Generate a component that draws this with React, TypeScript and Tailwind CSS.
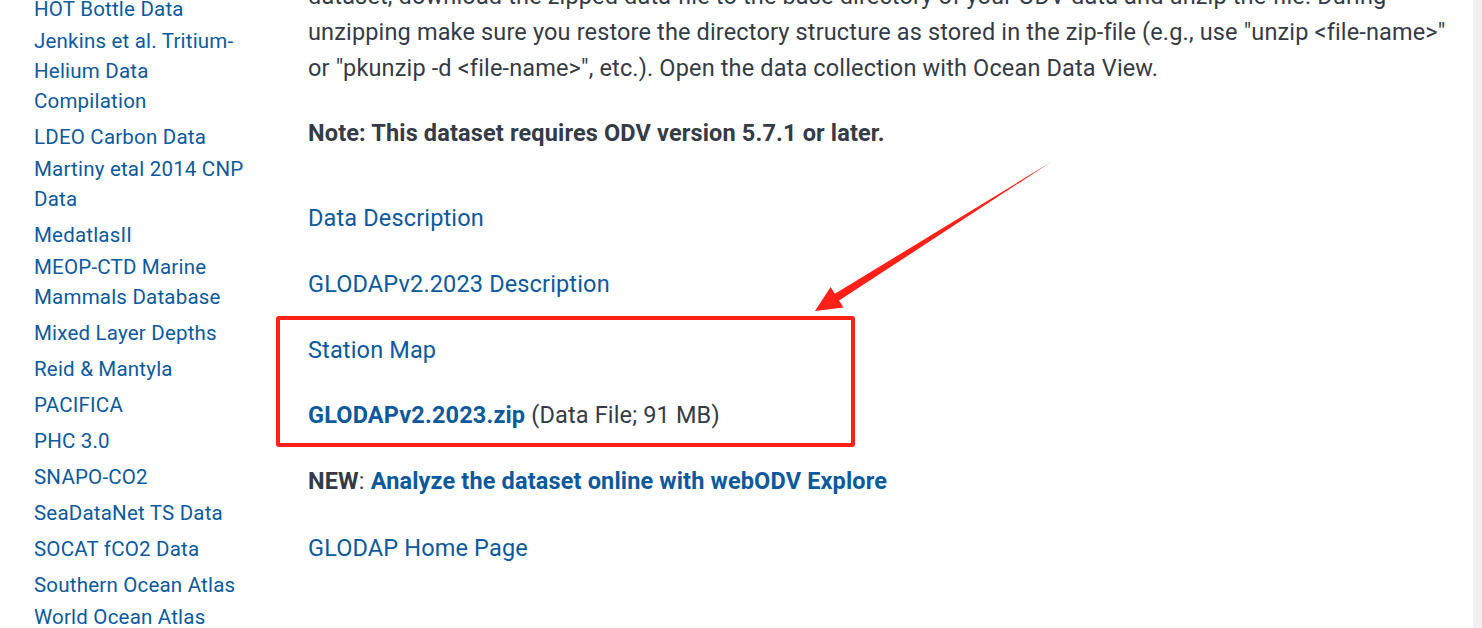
import React from 'react';

const sideLinks: { label: string; wrapped?: boolean }[] = [
  { label: 'HOT Bottle Data' },
  { label: 'Jenkins et al. Tritium-Helium Data Compilation', wrapped: true },
  { label: 'LDEO Carbon Data' },
  { label: 'Martiny etal 2014 CNP Data', wrapped: true },
  { label: 'MedatlasII' },
  { label: 'MEOP-CTD Marine Mammals Database', wrapped: true },
  { label: 'Mixed Layer Depths' },
  { label: 'Reid & Mantyla' },
  { label: 'PACIFICA' },
  { label: 'PHC 3.0' },
  { label: 'SNAPO-CO2' },
  { label: 'SeaDataNet TS Data' },
  { label: 'SOCAT fCO2 Data' },
  { label: 'Southern Ocean Atlas' },
  { label: 'World Ocean Atlas 2018', wrapped: true },
];

const App: React.FC = () => {
  return (
    <div className="relative h-[628px] w-[1482px] overflow-hidden bg-white font-['Roboto',sans-serif]">
      <div className="flex h-full">
        {/* Sidebar */}
        <aside className="w-[308px] shrink-0 pl-[34px]">
          <ul className="mt-[-9px] w-[214px] text-[20.5px] leading-[30px] tracking-[0.2px] text-[#0b5a9e]">
            {sideLinks.map((item, index) => (
              <li key={index} className={`py-[3px] ${item.wrapped ? 'mt-[-4px]' : ''}`}>
                <a href="#">{item.label}</a>
              </li>
            ))}
          </ul>
        </aside>

        {/* Main content */}
        <main className="flex-1 text-[23.5px] leading-[36px] tracking-[0.15px] text-[#343b46]">
          <p className="mt-[-22px] mb-[29px] whitespace-nowrap">
            dataset, download the zipped data file to the base directory of your ODV data and unzip the file. During
            <br />
            unzipping make sure you restore the directory structure as stored in the zip-file (e.g., use "unzip &lt;file-name&gt;"
            <br />
            or "pkunzip -d &lt;file-name&gt;", etc.). Open the data collection with Ocean Data View.
          </p>
          <p className="mb-[49px] font-bold">Note: This dataset requires ODV version 5.7.1 or later.</p>
          <p className="mb-[30px]">
            <a href="#" className="text-[#0b5a9e]">Data Description</a>
          </p>
          <p className="mb-[30px]">
            <a href="#" className="text-[#0b5a9e]">GLODAPv2.2023 Description</a>
          </p>
          <p className="mb-[29px]">
            <a href="#" className="text-[#0b5a9e]">Station Map</a>
          </p>
          <p className="mb-[30px]">
            <a href="#" className="font-bold text-[#0b5a9e]">GLODAPv2.2023.zip</a> (Data File; 91 MB)
          </p>
          <p className="mb-[31px]">
            <span className="font-bold">NEW</span>:{' '}
            <a href="#" className="font-bold text-[#0b5a9e]">Analyze the dataset online with webODV Explore</a>
          </p>
          <p>
            <a href="#" className="text-[#0b5a9e]">GLODAP Home Page</a>
          </p>
        </main>

        {/* Scrollbar track */}
        <div className="w-[9px] shrink-0 bg-[#f1f1f1]" />
      </div>

      {/* Annotation box */}
      <div className="pointer-events-none absolute left-[276px] top-[316px] h-[131px] w-[579px] rounded-[3px] border-[4px] border-[#ff2119]" />

      {/* Annotation arrow */}
      <svg className="pointer-events-none absolute left-0 top-0" width="1482" height="628" viewBox="0 0 1482 628">
        <polygon
          points="815,311 830.6,287 834.9,293.8 1051,162 839.1,300.6 843.4,307.4"
          fill="#ff2119"
        />
      </svg>
    </div>
  );
};

export default App;
